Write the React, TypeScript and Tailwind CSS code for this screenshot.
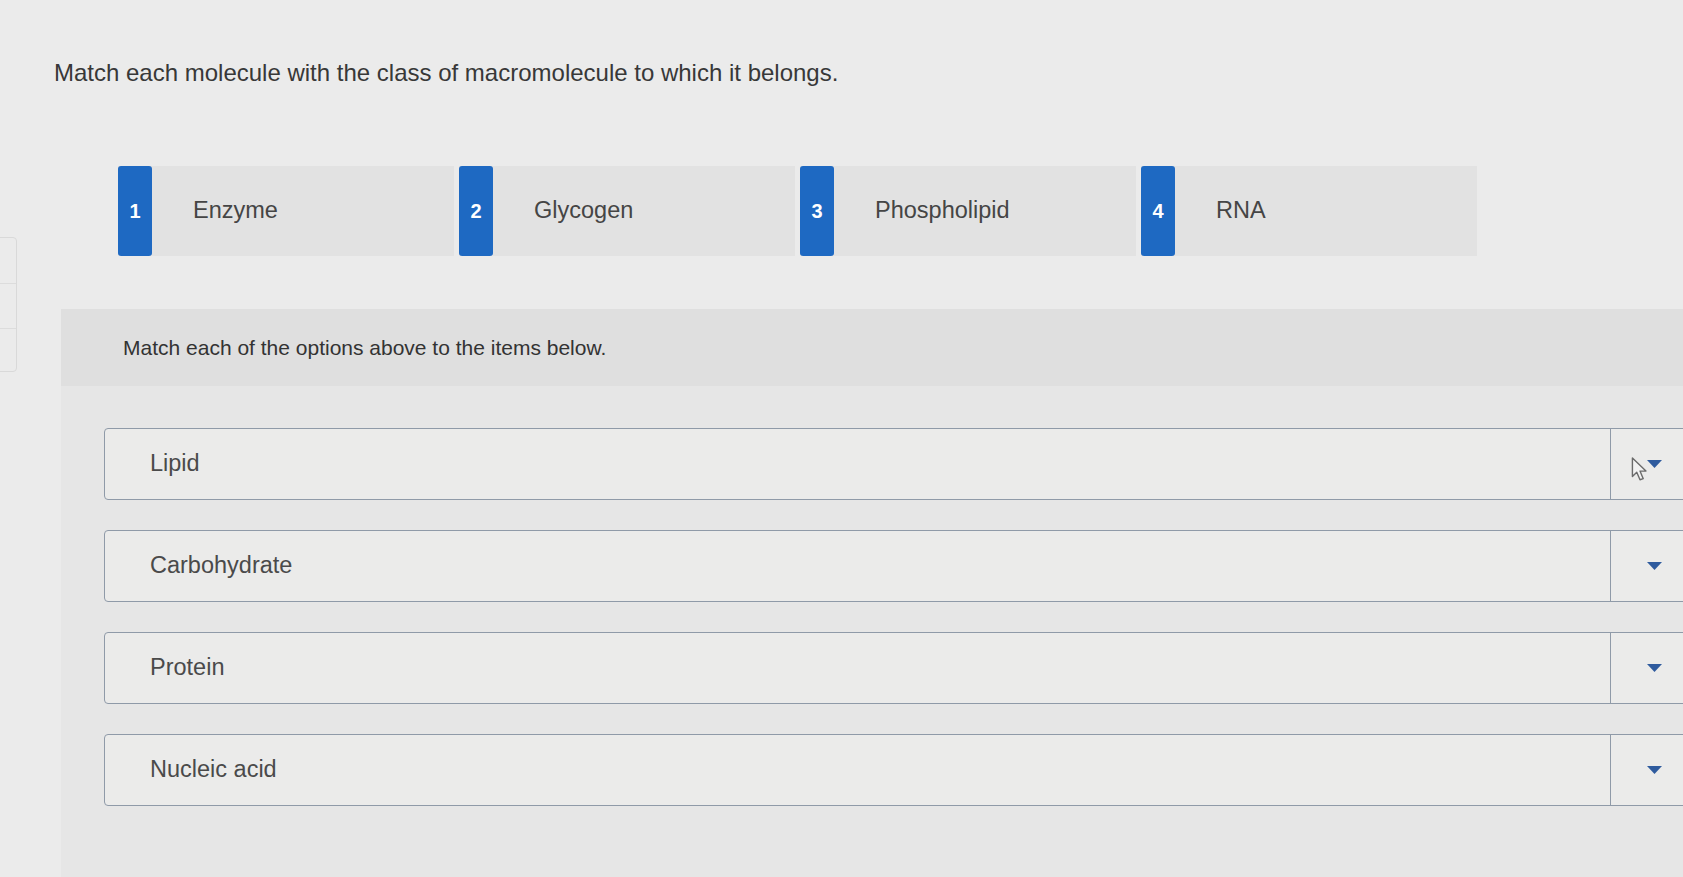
import React from 'react';

const options = [
  { n: 1, label: 'Enzyme' },
  { n: 2, label: 'Glycogen' },
  { n: 3, label: 'Phospholipid' },
  { n: 4, label: 'RNA' },
];

const items = ['Lipid', 'Carbohydrate', 'Protein', 'Nucleic acid'];

function Caret() {
  return (
    <svg width="15" height="8" viewBox="0 0 15 8" className="block">
      <path d="M0 0 H15 L7.5 8 Z" fill="#2f5b9e" />
    </svg>
  );
}

function Cursor() {
  return (
    <svg width="18" height="26" viewBox="0 0 16 24" className="block">
      <path
        d="M1 1 L1 18 L5 14 L8 21 L11 20 L8 13 L13.5 13 Z"
        fill="#f2f2f2"
        stroke="#6b6b6b"
        strokeWidth="1.3"
        strokeLinejoin="round"
      />
    </svg>
  );
}

export default function App() {
  return (
    <div
      className="relative h-[877px] w-full overflow-hidden bg-[#ebebeb] text-[#3a3a3a]"
      style={{ fontFamily: '"Liberation Sans", Arial, sans-serif' }}
    >
      {/* faint edge of a side tab */}
      <div className="absolute left-[-6px] top-[237px] h-[135px] w-[23px] rounded-r border border-[#d9d9d9]">
        <div className="mt-[45px] border-t border-[#dcdcdc]" />
        <div className="mt-[44px] border-t border-[#dcdcdc]" />
      </div>

      <h1 className="pl-[54px] pt-[58px] text-[24px] leading-[30px] text-[#383838]">
        Match each molecule with the class of macromolecule to which it belongs.
      </h1>

      <div className="ml-[118px] mt-[78px] flex gap-[5px]">
        {options.map((o) => (
          <div key={o.n} className="flex h-[90px] w-[336px] items-center bg-[#e2e2e2]">
            <div className="flex h-full w-[34px] items-center justify-center rounded-[3px] bg-[#1e69c2] text-[20px] font-bold text-white">
              {o.n}
            </div>
            <span className="ml-[41px] text-[23.5px] text-[#454545]">{o.label}</span>
          </div>
        ))}
      </div>

      <div className="ml-[61px] mt-[53px] h-[600px] bg-[#e6e6e6]">
        <div className="flex h-[77px] items-center bg-[#dfdfdf] pl-[62px] text-[21px] text-[#333]">
          Match each of the options above to the items below.
        </div>

        <div className="ml-[43px] mr-[-20px] mt-[42px] flex flex-col gap-[30px]">
          {items.map((t, i) => (
            <div
              key={t}
              className="flex h-[72px] items-stretch rounded-[4px] border-[1.5px] border-[#8f9aa8] bg-[#ebebea]"
            >
              <div className="flex flex-1 items-center pl-[45px] text-[23.5px] text-[#4a4a4a]">{t}</div>
              <div className="relative flex w-[92px] items-center border-l-[1.5px] border-[#8f9aa8] pl-[36px]">
                <Caret />
                {i === 0 && (
                  <div className="absolute left-[20px] top-[28px]">
                    <Cursor />
                  </div>
                )}
              </div>
            </div>
          ))}
        </div>
      </div>
    </div>
  );
}
